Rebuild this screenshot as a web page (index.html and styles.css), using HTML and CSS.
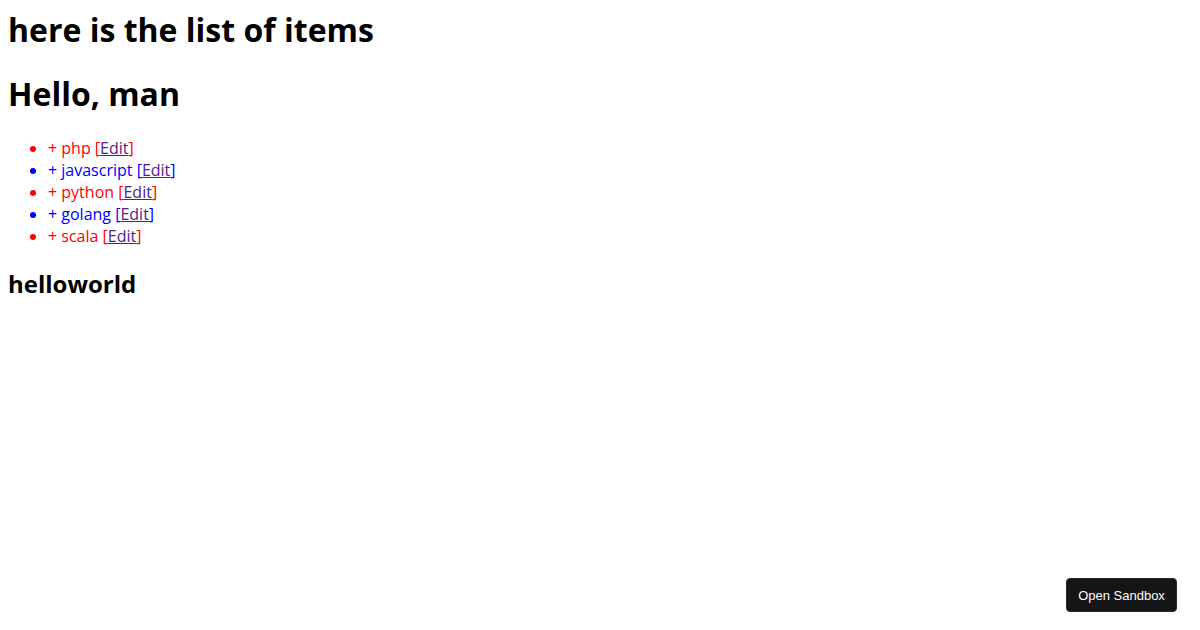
FILE: index.html
```html
<!DOCTYPE html>
<html>
<head>
<meta charset="utf-8">
<link rel="stylesheet" href="styles.css">
</head>
<body>
<div class="app">
  <h1 class="title first">here is the list of items</h1>
  <h1 class="title">Hello, man</h1>
  <ul class="items">
    <li class="red">+ php [<a class="edit" href="#">Edit</a>]</li>
    <li class="blue">+ javascript [<a class="edit" href="#">Edit</a>]</li>
    <li class="red">+ python [<a class="edit" href="#">Edit</a>]</li>
    <li class="blue">+ golang [<a class="edit" href="#">Edit</a>]</li>
    <li class="red">+ scala [<a class="edit" href="#">Edit</a>]</li>
  </ul>
  <h2 class="sub">helloworld</h2>
</div>
<button class="sandbox">Open Sandbox</button>
</body>
</html>
```
FILE: styles.css
```css
body {
  margin: 8px;
  font-family: "Open Sans", sans-serif;
  font-size: 16px;
  color: #000;
  background: #fff;
}
.app {
  display: block;
}
.title {
  font-size: 32px;
  font-weight: 700;
  margin: 21.44px 0;
}
.title.first {
  margin-top: 0;
}
.items {
  margin: 16px 0;
  padding-left: 40px;
}
.red { color: #ff0000; }
.blue { color: #0000ff; }
.edit {
  color: #551a8b;
  text-decoration: underline;
}
.sub {
  font-size: 24px;
  font-weight: 700;
  margin: 19.92px 0;
}
.sandbox {
  position: fixed;
  right: 23px;
  bottom: 18px;
  width: 111px;
  height: 34px;
  background: #151515;
  color: #fff;
  border: 1px solid #2a2a2a;
  border-radius: 4px;
  font-family: "Liberation Sans", Arial, sans-serif;
  font-size: 13px;
  padding: 0;
}
```
